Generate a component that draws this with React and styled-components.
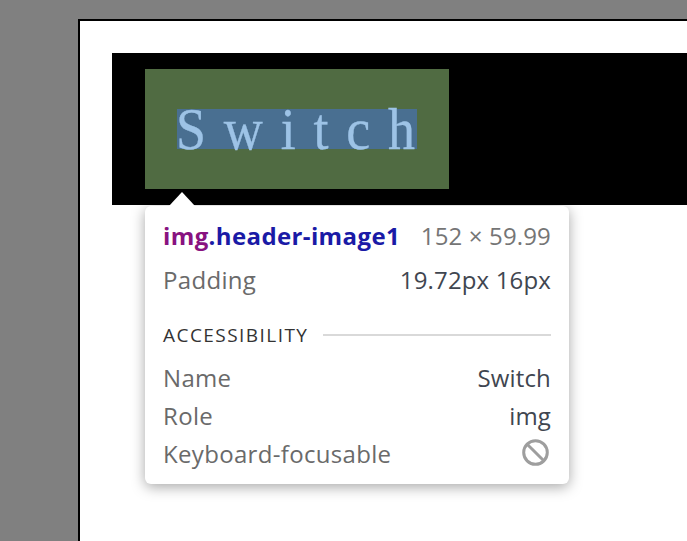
import styled, { createGlobalStyle } from "styled-components";

const GlobalStyle = createGlobalStyle`
  html, body {
    margin: 0;
    height: 541px;
    overflow: hidden;
    background: #808080;
  }
`;

const Page = styled.div`
  position: relative;
  width: 687px;
  height: 541px;
  padding: 19px 0 0 78px;
  box-sizing: border-box;
  overflow: hidden;
`;

const Frame = styled.div`
  width: 800px;
  height: 700px;
  box-sizing: border-box;
  padding: 32px;
  border: 2px solid #000;
  background: #fff;
`;

const Header = styled.div`
  width: 700px;
  height: 152px;
  box-sizing: border-box;
  padding: 16px 33px;
  background: #000;
`;

const HeaderImage = styled.div`
  width: 304px;
  height: 120px;
  box-sizing: border-box;
  padding: 40px 32px;
  background: #506b42;
`;

const ImageContent = styled.div`
  height: 40px;
  background: #496f91;
`;

const ImageText = styled.div`
  color: #9dc3e6;
  font-family: "Liberation Serif", serif;
  font-size: 54px;
  line-height: 40px;
  letter-spacing: 17.8px;
  white-space: nowrap;
  -webkit-text-stroke: 0.3px #9dc3e6;
  transform: translate(-1px, 2px) scaleY(1.1);
  transform-origin: 0 100%;
`;

const Tooltip = styled.div`
  position: absolute;
  left: 145px;
  top: 206px;
  width: 424px;
  height: 278px;
  box-sizing: border-box;
  padding: 11px 18px;
  background: #fff;
  border-radius: 6px;
  box-shadow: 0 3px 14px rgba(0, 0, 0, 0.35);
  font-family: "Open Sans", sans-serif;
  font-size: 24px;
  letter-spacing: 0.15px;
  color: #6a6a6a;

  &::before {
    content: "";
    position: absolute;
    left: 24px;
    top: -14px;
    border-left: 13px solid transparent;
    border-right: 13px solid transparent;
    border-bottom: 14px solid #fff;
  }
`;

const Row = styled.div`
  display: flex;
  justify-content: space-between;
  align-items: center;
  height: ${(p) => p.$height || 38}px;
  white-space: nowrap;
`;

const Title = styled.span`
  font-weight: 700;
  color: #1a1aa6;
  letter-spacing: 0.38px;
`;

const Tag = styled.span`
  color: #881280;
`;

const Dimensions = styled.span`
  color: #757575;
`;

const Label = styled.span`
  letter-spacing: 0.32px;
`;

const Value = styled.span`
  color: #3f4650;
`;

const SectionHead = styled.div`
  display: flex;
  align-items: center;
  gap: 15px;
  margin-top: 15px;
  margin-bottom: 8px;
  height: 30px;
  font-size: 19px;
  letter-spacing: 1.45px;
  color: #333;
`;

const Rule = styled.div`
  flex: 1;
  height: 2px;
  background: #d9d9d9;
`;

const BanSvg = styled.svg`
  margin: 0 2px 2px 0;
`;

const BanIcon = () => (
  <BanSvg width="27" height="27" viewBox="0 0 27 27" fill="none" stroke="#9e9e9e" strokeWidth="3">
    <circle cx="13.5" cy="13.5" r="11.8" />
    <line x1="5.2" y1="5.2" x2="21.8" y2="21.8" />
  </BanSvg>
);

export default function App() {
  return (
    <>
      <GlobalStyle />
      <Page>
        <Frame>
          <Header>
            <HeaderImage>
              <ImageContent>
                <ImageText>Switch</ImageText>
              </ImageContent>
            </HeaderImage>
          </Header>
        </Frame>
        <Tooltip>
          <Row $height={36}>
            <Title>
              <Tag>img</Tag>.header-image1
            </Title>
            <Dimensions>152 × 59.99</Dimensions>
          </Row>
          <Row $height={52}>
            <Label>Padding</Label>
            <Value>19.72px 16px</Value>
          </Row>
          <SectionHead>
            ACCESSIBILITY
            <Rule />
          </SectionHead>
          <Row>
            <Label>Name</Label>
            <Value>Switch</Value>
          </Row>
          <Row>
            <Label>Role</Label>
            <Value>img</Value>
          </Row>
          <Row>
            <Label>Keyboard-focusable</Label>
            <BanIcon />
          </Row>
        </Tooltip>
      </Page>
    </>
  );
}
